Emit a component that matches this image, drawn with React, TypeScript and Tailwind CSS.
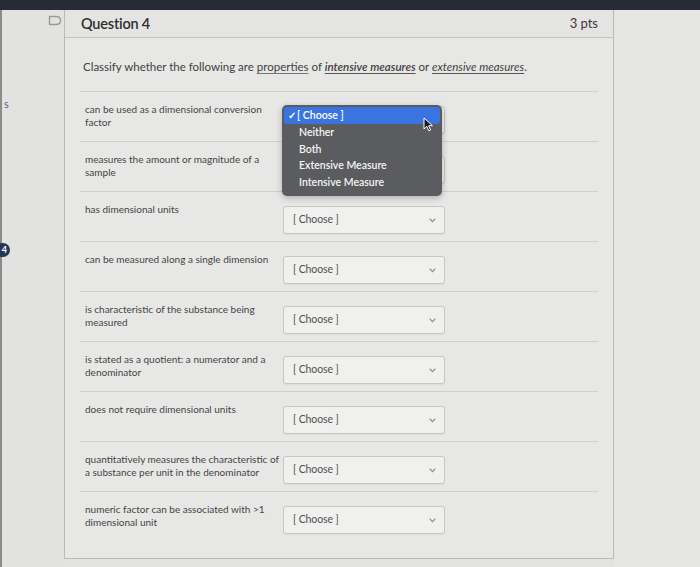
import React from 'react';

const rows: string[][] = [
    ['can be used as a dimensional conversion', 'factor'],
    ['measures the amount or magnitude of a', 'sample'],
    ['has dimensional units'],
    ['can be measured along a single dimension'],
    ['is characteristic of the substance being', 'measured'],
    ['is stated as a quotient: a numerator and a', 'denominator'],
    ['does not require dimensional units'],
    ['quantitatively measures the characteristic of', 'a substance per unit in the denominator'],
    ['numeric factor can be associated with >1', 'dimensional unit'],
];

const options = ['Neither', 'Both', 'Extensive Measure', 'Intensive Measure'];

function Chevron() {
    return (
        <svg width="7" height="5" viewBox="0 0 7 5" className="text-[#8d8d8b]">
            <path d="M1 1 L3.5 3.6 L6 1" fill="none" stroke="currentColor" strokeWidth="1.1" strokeLinecap="round" />
        </svg>
    );
}

function ChooseSelect({ open }: { open?: boolean }) {
    return (
        <div className="relative mt-[14px] w-[162px] h-[28px] shrink-0">
            <div className="w-full h-full flex items-center justify-between pl-[9px] pr-[8px] rounded-[3px] border border-[#c6c6c3] bg-[#f0f0ee] shadow-[0_1px_1px_rgba(0,0,0,0.05)]">
                <span className="text-[10.5px] text-[#505050] tracking-[-0.1px]">[ Choose ]</span>
                <Chevron />
            </div>

            {open && (
                <div className="absolute -left-[1px] -top-[1px] w-[160px] h-[91px] z-10 rounded-[5px] bg-[#5b5c5f] shadow-[0_2px_6px_rgba(0,0,0,0.25)] px-[2px] pt-[2px]">
                    {/* highlighted option */}
                    <div className="h-[17px] rounded-[3px] bg-[#3a74e0] flex items-center pl-[4px] text-white text-[10.5px] font-semibold">
                        <span className="w-[9px] text-[10px]">✓</span>
                        <span>[ Choose ]</span>
                    </div>
                    <div className="flex flex-col pt-[1px]">
                        {options.map((o) => (
                            <div key={o} className="h-[16.5px] flex items-center pl-[15px] text-[10.5px] font-semibold text-[#f4f4f4]">
                                {o}
                            </div>
                        ))}
                    </div>
                    {/* mouse cursor */}
                    <svg width="11" height="15" viewBox="0 0 11 15" className="absolute left-[141px] top-[12px]">
                        <path d="M1 1 L1 12 L3.8 9.4 L5.8 13.8 L7.6 13 L5.6 8.8 L9.4 8.6 Z" fill="#1b1b1b" stroke="#ffffff" strokeWidth="1" strokeLinejoin="round" />
                    </svg>
                </div>
            )}
        </div>
    );
}

export default function App() {
    return (
        <div className="w-[700px] h-[567px] overflow-hidden bg-[#e3e3e1] flex flex-col" style={{ fontFamily: 'Lato, "Open Sans", sans-serif' }}>
            {/* dark top bar */}
            <div className="h-[10px] shrink-0 bg-[#272b35]" />

            <div className="flex flex-1 min-h-0">
                {/* left gutter */}
                <div className="relative w-[64px] shrink-0 border-l-[2px] border-[#8c8c8a] bg-[#e2e2e0]">
                    <span className="absolute left-[2px] top-[86px] text-[11px] text-[#4d6a8c]">s</span>
                    <span className="absolute -left-[7px] top-[233px] w-[15px] h-[14px] rounded-full bg-[#263756] text-white text-[9px] font-bold flex items-center justify-end pr-[3px]">4</span>
                    <svg width="14" height="11" viewBox="0 0 14 11" className="absolute left-[46px] top-[5px]">
                        <path d="M1.5 1.5 H8 Q12.5 1.5 12.5 5.5 Q12.5 9.5 8 9.5 H1.5 Z" fill="none" stroke="#9a9a98" strokeWidth="1.4" strokeLinejoin="round" />
                    </svg>
                </div>

                {/* question card */}
                <div className="w-[550px] shrink-0 h-[549px] border-l border-r border-b border-[#b9b9b6] bg-[#e7e7e5] flex flex-col">
                    <div className="h-[28px] shrink-0 border-b border-[#c4c4c1] bg-[#e4e4e2] flex items-center justify-between pl-[16px] pr-[15px]">
                        <span className="text-[14.5px] font-semibold text-[#2e2e2e] tracking-[-0.2px]">Question 4</span>
                        <span className="text-[13px] text-[#3a3a3a]">3 pts</span>
                    </div>

                    <div className="px-[15px]">
                        <div className="pt-[22px] pb-[17px] border-b border-[#cfcfcc]">
                            <p className="pl-[3px] text-[11.5px] leading-[14px] text-[#424242]">
                                Classify whether the following are <span className="underline decoration-[#777] underline-offset-2">properties</span> of{' '}
                                <span className="italic font-semibold underline decoration-[#555] underline-offset-2">intensive measures</span> or{' '}
                                <span className="italic underline decoration-[#555] underline-offset-2">extensive measures</span>.
                            </p>
                        </div>

                        {rows.map((lines, i) => (
                            <div
                                key={i}
                                className={`flex h-[50px] ${i < rows.length - 1 ? 'border-b border-[#cfcfcc]' : ''}`}
                            >
                                <div className="w-[203px] shrink-0 pl-[5px] pt-[11px] text-[10px] leading-[13px] text-[#454545] whitespace-nowrap">
                                    {lines.map((l) => (
                                        <div key={l}>{l}</div>
                                    ))}
                                </div>
                                <ChooseSelect open={i === 0} />
                            </div>
                        ))}
                    </div>
                </div>

                {/* right side */}
                <div className="flex-1 bg-[#e6e6e4]" />
            </div>
        </div>
    );
}
